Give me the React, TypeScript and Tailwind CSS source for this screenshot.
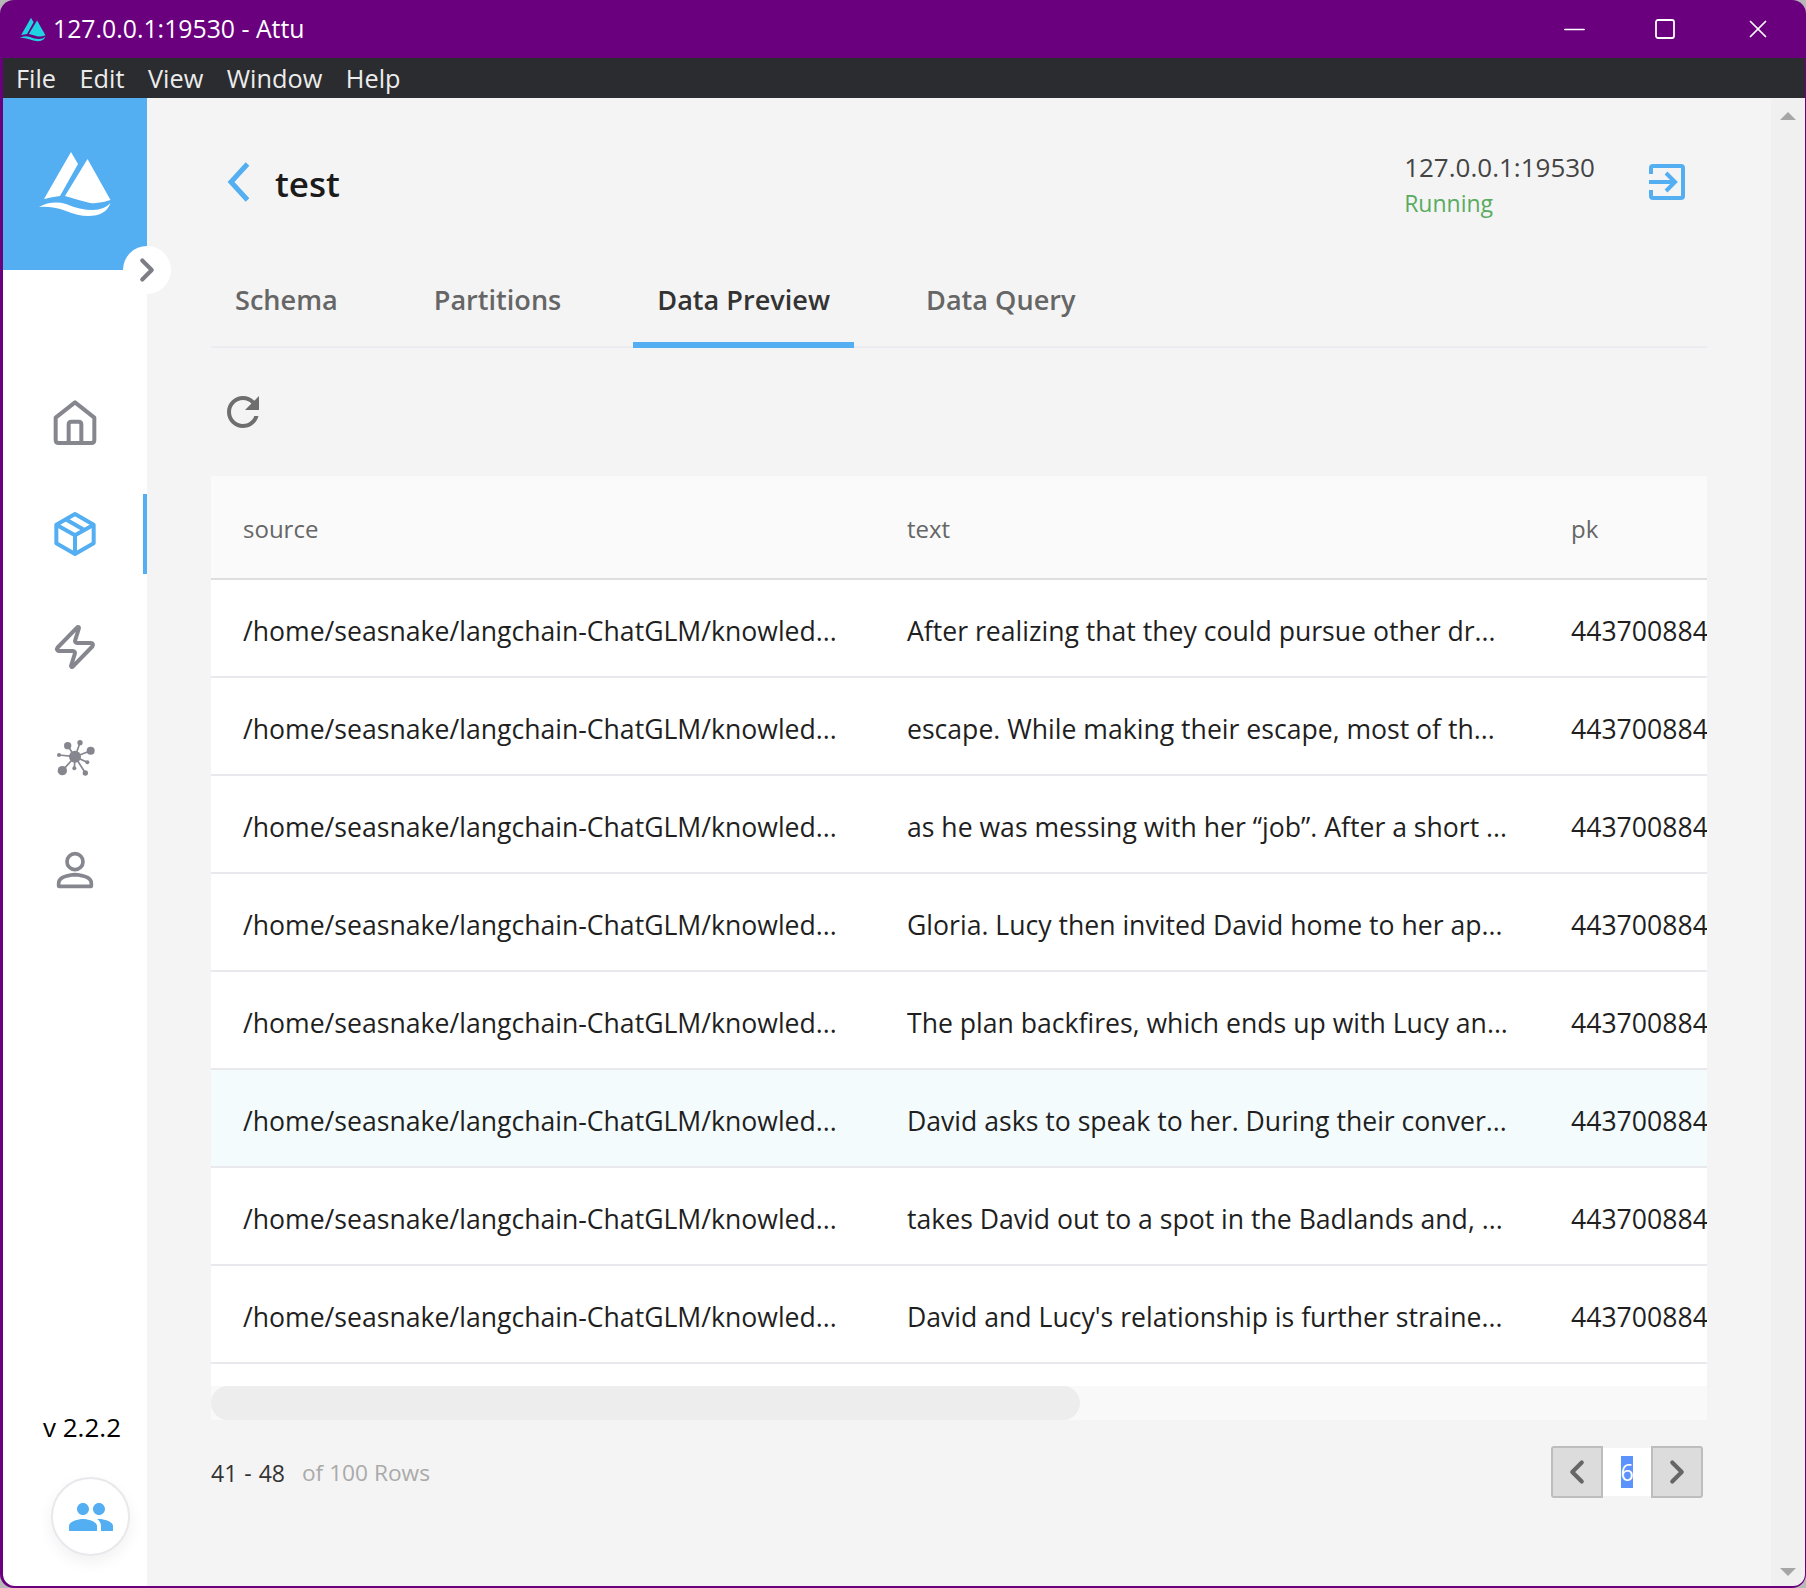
import { ChevronLeft, ChevronRight, Minus, Square, X } from "lucide-react";

const rows = [
  "After realizing that they could pursue other dr...",
  "escape. While making their escape, most of th...",
  "as he was messing with her “job”. After a short ...",
  "Gloria. Lucy then invited David home to her ap...",
  "The plan backfires, which ends up with Lucy an...",
  "David asks to speak to her. During their conver...",
  "takes David out to a spot in the Badlands and, ...",
  "David and Lucy's relationship is further straine...",
];

const Logo = ({ className }: { className: string }) => (
  <svg viewBox="38 150 74 68" className={className} fill="currentColor">
    <path d="M71 152 L78 164 L60 196 Q52 197 44 199 Z" />
    <path d="M87.5 159 L110.5 200 Q100 204 90 203 Q78 200 65 196 Z" />
    <path d="M39 207 Q52 200 66 204 Q80 210 93 210 Q104 210 110.5 203 Q106 216 88 216 Q78 216 66 211 Q52 206 39 207 Z" />
  </svg>
);

const HomeIcon = () => (
  <svg viewBox="0 -6 180 180" className="w-[60px] h-[60px]" fill="none" stroke="currentColor" strokeWidth="12" strokeLinejoin="round">
    <path d="M90 22 L148 68 V135 Q148 144 139 144 H41 Q32 144 32 135 V68 Z" />
    <path d="M71 144 V88 Q71 80 79 80 H101 Q109 80 109 88 V144" />
  </svg>
);

const CubeIcon = () => (
  <svg viewBox="0 11 180 180" className="w-[60px] h-[60px]" fill="none" stroke="currentColor" strokeWidth="12" strokeLinejoin="round">
    <path d="M90 38 L146 70 V126 L90 158 L34 126 V70 Z" />
    <path d="M34 70 L90 102 L146 70 M90 102 V158" />
    <path d="M62 54 L118 86" />
  </svg>
);

const ZapIcon = () => (
  <svg viewBox="0 0 24 24" className="w-[48px] h-[48px]" fill="none" stroke="currentColor" strokeWidth="2" strokeLinejoin="round">
    <path d="M4 14a1 1 0 0 1-.78-1.63l9.9-10.2a.5.5 0 0 1 .86.46l-1.92 6.02A1 1 0 0 0 13 10h7a1 1 0 0 1 .78 1.63l-9.9 10.2a.5.5 0 0 1-.86-.46l1.92-6.02A1 1 0 0 0 11 14z" />
  </svg>
);

const nodes = [
  [68, 47, 11],
  [105, 38, 8],
  [137, 62, 12],
  [42, 75, 6],
  [127, 97, 6],
  [52, 122, 14],
  [88, 115, 6],
  [121, 129, 8],
];

const NetworkIcon = () => (
  <svg viewBox="0 -3 180 180" className="w-[60px] h-[60px]" fill="currentColor" stroke="currentColor" strokeWidth="5">
    {nodes.map(([x, y, r]) => (
      <g key={`${x}-${y}`}>
        <line x1="90" y1="80" x2={x} y2={y} />
        <circle cx={x} cy={y} r={r} stroke="none" />
      </g>
    ))}
    <circle cx="90" cy="80" r="18" stroke="none" />
  </svg>
);

const UserIcon = () => (
  <svg viewBox="0 3 180 180" className="w-[60px] h-[60px]" fill="none" stroke="currentColor" strokeWidth="11" strokeLinejoin="round">
    <circle cx="90" cy="65" r="24" />
    <path d="M41 139 V130 Q41 108 90 104 Q139 108 139 130 V139 Z" />
  </svg>
);

const NavItem = ({ active, children }: { active?: boolean; children: React.ReactNode }) => (
  <div className={`relative h-[80px] mb-[32px] flex items-center justify-center ${active ? "text-[#53aef2]" : "text-[#86868f]"}`}>
    {children}
    {active && <div className="absolute right-0 -top-[1px] w-[4px] h-full bg-[#53aef2]" />}
  </div>
);

export default function App() {
  return (
    <div className="w-[1806px] h-[1588px] bg-[#b8b8b8] font-['Open_Sans',sans-serif]">
      <div className="w-full h-full flex flex-col rounded-[14px] overflow-hidden bg-[#6b007f]">
        {/* Title bar */}
        <div className="h-[58px] shrink-0 flex items-center text-white pl-[19px]">
          <Logo className="w-[27px] h-[25px] text-[#1fd3e2]" />
          <span className="ml-[7px] text-[24.8px]">127.0.0.1:19530 - Attu</span>
          <div className="ml-auto flex items-center">
            <Minus className="w-[33px] h-[33px] mr-[62px]" strokeWidth={1.2} />
            <Square className="w-[24px] h-[24px] mr-[66px]" strokeWidth={1.8} />
            <X className="w-[30px] h-[30px] mr-[33px]" strokeWidth={1.4} />
          </div>
        </div>

        {/* Menu + app */}
        <div className="flex-1 flex flex-col min-h-0 pl-[3px] pr-[1px] pb-[2px]">
          <div className="h-[40px] shrink-0 bg-[#2b2c30] text-[#ececec] text-[25.3px] flex items-center pl-[13px] pt-[2px] gap-[23.5px]">
            <span>File</span>
            <span>Edit</span>
            <span>View</span>
            <span>Window</span>
            <span>Help</span>
          </div>

          <div className="flex-1 flex min-h-0 rounded-b-[12px] overflow-hidden">
            {/* Sidebar */}
            <aside className="relative w-[144px] shrink-0 bg-white flex flex-col">
              <div className="h-[172px] bg-[#53aef2] flex items-start justify-center pt-[52px]">
                <Logo className="w-[74px] h-[68px] text-white" />
              </div>
              <div className="absolute left-[120px] top-[148px] w-[48px] h-[48px] rounded-full bg-white flex items-center justify-center text-[#7d7d85] z-10">
                <ChevronRight className="w-[38px] h-[38px]" strokeWidth={2.6} />
              </div>
              <nav className="pt-[113px] flex flex-col">
                <NavItem><HomeIcon /></NavItem>
                <NavItem active><CubeIcon /></NavItem>
                <NavItem><ZapIcon /></NavItem>
                <NavItem><NetworkIcon /></NavItem>
                <NavItem><UserIcon /></NavItem>
              </nav>
              <div className="mt-auto pl-[40px] text-[26px] leading-[36px] text-black">v 2.2.2</div>
              <div className="mt-[32px] mb-[30px] ml-[48px] w-[79px] h-[79px] rounded-full bg-white border-2 border-[#e9e9ed] shadow-[0_6px_16px_rgba(0,0,0,0.06)] flex items-center justify-center text-[#53aef2]">
                <svg viewBox="0 0 24 24" className="w-[48px] h-[48px]" fill="currentColor">
                  <path d="M16 11c1.66 0 2.99-1.34 2.99-3S17.66 5 16 5c-1.66 0-3 1.34-3 3s1.34 3 3 3zm-8 0c1.66 0 2.99-1.34 2.99-3S9.66 5 8 5C6.34 5 5 6.34 5 8s1.34 3 3 3zm0 2c-2.33 0-7 1.17-7 3.5V19h14v-2.5c0-2.33-4.67-3.5-7-3.5zm8 0c-.29 0-.62.02-.97.05 1.16.84 1.97 1.97 1.97 3.45V19h6v-2.5c0-2.33-4.67-3.5-7-3.5z" />
                </svg>
              </div>
            </aside>

            {/* Main */}
            <main className="flex-1 min-w-0 bg-[#f4f4f4] px-[64px] flex flex-col">
              <header className="h-[150px] shrink-0 flex items-start">
                <svg viewBox="0 0 30 48" className="mt-[60px] ml-[11px] w-[30px] h-[48px]" fill="none" stroke="#53aef2" strokeWidth="5">
                  <path d="M25.5 6 L9 24 L25.5 42" />
                </svg>
                <h1 className="mt-[61px] ml-[23px] text-[35px] leading-[50px] font-semibold text-[#1b1b1b]">test</h1>
                <div className="ml-auto mt-[51px] text-[26px] leading-[36px] text-[#444]">
                  127.0.0.1:19530
                  <div className="text-[23px] leading-[37px] text-[#5aab5f]">Running</div>
                </div>
                <svg viewBox="0 0 36 36" className="ml-[54px] mr-[22px] mt-[66px] w-[36px] h-[36px]" fill="none" stroke="#53aef2" strokeWidth="4">
                  <path d="M2 10 V4 Q2 2 4 2 H32 Q34 2 34 4 V32 Q34 34 32 34 H4 Q2 34 2 32 V26" />
                  <path d="M0 18 H25 M17 9 L26 18 L17 27" />
                </svg>
              </header>

              {/* Tabs */}
              <div className="h-[100px] shrink-0 flex items-stretch gap-[48px] border-b-2 border-[#ececf0] text-[27.1px] font-semibold text-[#666]">
                <div className="px-[24px] pt-[6px] flex items-center">Schema</div>
                <div className="px-[24px] pt-[6px] flex items-center">Partitions</div>
                <div className="px-[24px] pt-[10px] flex items-center text-[#333] border-b-[6px] border-[#53aef2] -mb-[2px]">Data Preview</div>
                <div className="px-[24px] pt-[6px] flex items-center">Data Query</div>
              </div>

              <div className="h-[128px] shrink-0 pl-[8px] pt-[40px] text-[#6e6e6e]">
                <svg viewBox="0 0 24 24" className="w-[48px] h-[48px]" fill="currentColor">
                  <path d="M17.65 6.35C16.2 4.9 14.21 4 12 4c-4.42 0-7.99 3.58-7.99 8s3.57 8 7.99 8c3.73 0 6.84-2.55 7.73-6h-2.08c-.82 2.33-3.04 4-5.65 4-3.31 0-6-2.69-6-6s2.69-6 6-6c1.66 0 3.14.69 4.22 1.78L13 11h7V4l-2.35 2.35z" />
                </svg>
              </div>

              {/* Table */}
              <div className="shrink-0 text-[26.6px] bg-white">
                <div className="h-[104px] flex items-center pt-[4px] bg-[#fafafa] border-b-2 border-[#dedede] text-[#666] text-[24px]">
                  <div className="w-[664px] pl-[32px]">source</div>
                  <div className="w-[664px] pl-[32px]">text</div>
                  <div className="pl-[32px]">pk</div>
                </div>
                {rows.map((text, i) => (
                  <div key={text} className={`h-[98px] flex items-center pt-[8px] border-b-2 border-[#e9e9ed] text-[#1f1f1f] whitespace-nowrap overflow-hidden ${i === 5 ? "bg-[#f4fbfd]" : ""}`}>
                    <div className="w-[664px] shrink-0 pl-[32px]">/home/seasnake/langchain-ChatGLM/knowled...</div>
                    <div className="w-[664px] shrink-0 pl-[32px]">{text}</div>
                    <div className="pl-[32px]">443700884</div>
                  </div>
                ))}
                <div className="h-[22px]" />
                <div className="h-[34px] bg-[#f9f9f9]">
                  <div className="w-[869px] h-full rounded-full bg-[#ededed]" />
                </div>
              </div>

              {/* Footer */}
              <div className="mt-[26px] flex items-center text-[23px] h-[52px]">
                <span className="text-[#333] pt-[2px] [word-spacing:1px]">41 - 48</span>
                <span className="ml-[17px] pt-[2px] text-[22.7px] text-[#aaa]">of 100 Rows</span>
                <div className="ml-auto mr-[4px] flex items-center text-[#666]">
                  <div className="w-[52px] h-[52px] rounded-l-[3px] bg-[#dcdcdc] border-2 border-[#bdbdbd] flex items-center justify-center">
                    <ChevronLeft className="w-[38px] h-[38px]" strokeWidth={2.6} />
                  </div>
                  <div className="w-[48px] h-[48px] bg-white flex items-center justify-center">
                    <span className="w-[12px] h-[32px] bg-[#5b92fb] text-white text-[23px] leading-[32px] flex justify-center">6</span>
                  </div>
                  <div className="w-[52px] h-[52px] rounded-r-[3px] bg-[#dcdcdc] border-2 border-[#bdbdbd] flex items-center justify-center">
                    <ChevronRight className="w-[38px] h-[38px]" strokeWidth={2.6} />
                  </div>
                </div>
              </div>
            </main>

            {/* Window scrollbar */}
            <div className="w-[34px] shrink-0 bg-[#f0f0f0] flex flex-col items-center justify-between pt-[14px] pb-[10px]">
              <div className="w-0 h-0 border-x-[8px] border-x-transparent border-b-[8px] border-b-[#a6a6a6]" />
              <div className="w-0 h-0 border-x-[8px] border-x-transparent border-t-[8px] border-t-[#a6a6a6]" />
            </div>
          </div>
        </div>
      </div>
    </div>
  );
}
